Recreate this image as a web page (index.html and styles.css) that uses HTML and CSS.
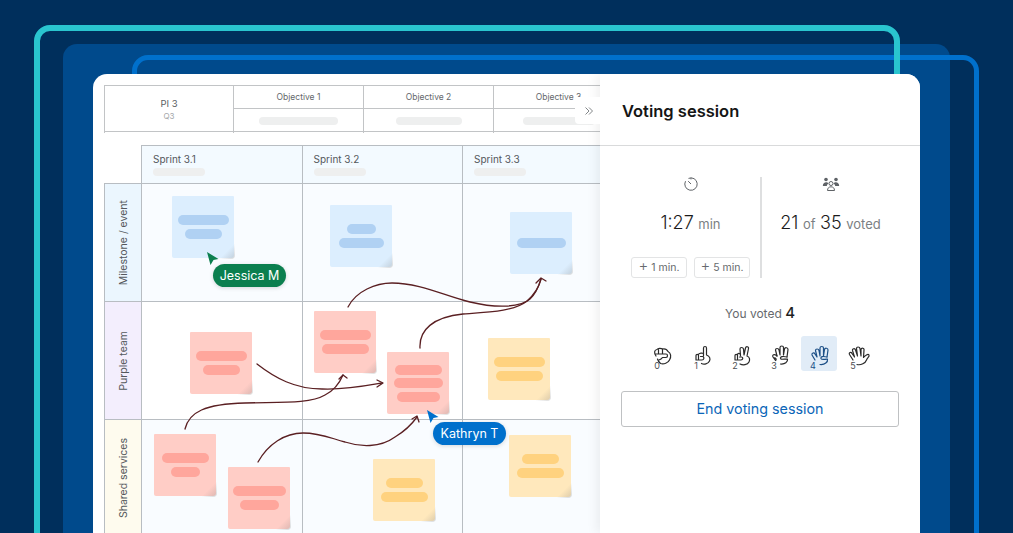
FILE: index.html
```html
<!DOCTYPE html>
<html lang="en">
<head>
    <meta charset="UTF-8">
    <meta name="viewport" content="width=device-width, initial-scale=1.0">
    <title>Voting session</title>
    <link rel="stylesheet" href="styles.css">
</head>
<body>
    <div class="backdrop backdrop-fill"></div>
    <div class="backdrop backdrop-blue"></div>
    <div class="backdrop backdrop-teal"></div>

    <div class="card">
        <section class="board">
            <div class="pi-table">
                <div class="pi-name">
                    <strong>PI 3</strong>
                    <span>Q3</span>
                </div>
                <div class="pi-objective">Objective 1</div>
                <div class="pi-objective">Objective 2</div>
                <div class="pi-objective">Objective 3</div>
                <div class="pi-slot"><i class="skeleton skeleton-a"></i></div>
                <div class="pi-slot"><i class="skeleton skeleton-b"></i></div>
                <div class="pi-slot"><i class="skeleton skeleton-c"></i></div>
            </div>

            <div class="plan">
                <div class="plan-corner"></div>
                <div class="sprint">Sprint 3.1<i class="skeleton"></i></div>
                <div class="sprint">Sprint 3.2<i class="skeleton"></i></div>
                <div class="sprint">Sprint 3.3<i class="skeleton"></i></div>

                <div class="team team-blue"><span>Milestone / event</span></div>
                <div class="cell tinted"></div>
                <div class="cell tinted"></div>
                <div class="cell tinted"></div>

                <div class="team team-purple"><span>Purple team</span></div>
                <div class="cell"></div>
                <div class="cell"></div>
                <div class="cell"></div>

                <div class="team team-yellow"><span>Shared services</span></div>
                <div class="cell tinted"></div>
                <div class="cell tinted"></div>
                <div class="cell tinted"></div>
            </div>

            <!-- sticky notes sit on the plan like pins on a map -->
            <div class="note blue note-1"><i class="w51"></i><i class="w37"></i></div>
            <div class="note blue note-2"><i class="w29"></i><i class="w45"></i></div>
            <div class="note blue note-3"><i class="w49"></i></div>
            <div class="note red note-4"><i class="w51"></i><i class="w37"></i></div>
            <div class="note red note-5"><i class="w51"></i><i class="w47"></i></div>
            <div class="note red note-6"><i class="w47"></i><i class="w49"></i><i class="w43"></i></div>
            <div class="note yellow note-7"><i class="w51"></i><i class="w47"></i></div>
            <div class="note red note-8"><i class="w47"></i><i class="w29"></i></div>
            <div class="note red note-9"><i class="w53"></i><i class="w39"></i></div>
            <div class="note yellow note-10"><i class="w37"></i><i class="w47"></i></div>
            <div class="note yellow note-11"><i class="w37"></i><i class="w47"></i></div>

            <svg class="links" viewBox="93 74 507 459" fill="none">
                <path d="M348 307C356 291 376 283 392 283C420 283 445 296 470 302C495 308 520 308 530 299C537 293 539 285 541 279"/>
                <path d="M420 348C419 330 433 317 463 314C490 312 515 311 527 301C535 294 539 287 541 279"/>
                <path d="M536 283L541 278L546 281"/>
                <path d="M257 364C275 378 295 389 322 389C345 390 365 386 382 383"/>
                <path d="M377 380L383 383L377 387"/>
                <path d="M185 429C189 412 205 404 245 403C280 402 310 404 325 395C335 390 340 382 343 375"/>
                <path d="M339 379L343 375L347 378"/>
                <path d="M258 462C268 444 285 433 303 433C320 433 330 438 345 442C360 447 380 448 395 437C405 431 412 424 417 417"/>
                <path d="M412 419L417 416L419 422"/>
            </svg>

            <div class="cursor cursor-green">
                <svg width="12" height="13" viewBox="0 0 12 13"><path d="M0 0L11.500 7L6.500 8L3.500 13Z"/></svg>
                <span class="cursor-tag">Jessica M</span>
            </div>
            <div class="cursor cursor-blue">
                <svg width="12" height="13" viewBox="0 0 12 13"><path d="M0 0L11.500 7L6.500 8L3.500 13Z"/></svg>
                <span class="cursor-tag">Kathryn T</span>
            </div>
        </section>

        <aside class="panel">
            <button class="collapse" type="button" aria-label="Collapse">
                <svg width="10" height="10" viewBox="0 0 10 10" fill="none"><path d="M1.500 1.500L5 5L1.500 8.500M5 1.500L8.500 5L5 8.500"/></svg>
            </button>

            <header class="panel-header">
                <h2>Voting session</h2>
            </header>

            <div class="stats">
                <div class="stat">
                    <svg class="stat-icon" width="16" height="16" viewBox="0 0 16 16" fill="none">
                        <path d="M5.500 2.400A6.200 6.200 0 1 1 2.500 5.200"/>
                        <path d="M8 1.800V3.400M5.200 5.200L8 8"/>
                    </svg>
                    <p class="stat-value">1:27 <small>min</small></p>
                    <div class="stat-actions">
                        <button type="button"><b>+</b> 1 min.</button>
                        <button type="button"><b>+</b> 5 min.</button>
                    </div>
                </div>
                <div class="stat">
                    <svg class="stat-icon" width="18" height="16" viewBox="0 0 18 16">
                        <circle cx="4" cy="3.500" r="1.800" class="solid"/>
                        <circle cx="14" cy="3.500" r="1.800" class="solid"/>
                        <path d="M0.800 10C0.800 7.500 2.500 6.300 4 6.300C5 6.300 6 6.800 6.500 7.600C5.500 8.200 5 9 4.800 10Z" class="solid"/>
                        <path d="M17.200 10C17.200 7.500 15.500 6.300 14 6.300C13 6.300 12 6.800 11.500 7.600C12.500 8.200 13 9 13.200 10Z" class="solid"/>
                        <circle cx="9" cy="7.500" r="2" class="line"/>
                        <path d="M5.500 14.500C5.500 12 7 10.800 9 10.800C11 10.800 12.500 12 12.500 14.500Z" class="line"/>
                    </svg>
                    <p class="stat-value">21 <small>of</small> 35 <small>voted</small></p>
                </div>
            </div>

            <p class="your-vote">You voted <strong>4</strong></p>

            <div class="hands">
                <button class="hand" type="button">
                    <svg width="28" height="30" viewBox="0 0 28 30" fill="none">
                        <path d="M7 15C5 12 5 9 8 8.500C9 7 12 7 13.500 8C16 7.500 18 8.500 19 10.500C22 12 22.500 16 20.500 19C19 22 15 23.500 11.500 22.500C10 21 9 20 8.500 18"/>
                        <path d="M9.500 8.500V13M13.500 8V13M6.500 13H17C19 13 19 16.500 17 16.500H13.500C12.500 18 11.500 18.500 10 19"/>
                        <text x="8" y="28">0</text>
                    </svg>
                </button>
                <button class="hand" type="button">
                    <svg width="28" height="30" viewBox="0 0 28 30" fill="none">
                        <path d="M15.500 15V7C15.500 5 18.500 5 18.500 7V14C22 15 22.500 18 21.500 20C20 23 16 24 13.500 22.500"/>
                        <path d="M8 19V14.500C8 13 10.500 13 10.500 14.500M10.500 18V13.500C10.500 12 15.500 11.500 15.500 13M8 19H14C16 19 16.500 16.500 15 15.500H12.500"/>
                        <text x="8" y="28">1</text>
                    </svg>
                </button>
                <button class="hand" type="button">
                    <svg width="28" height="30" viewBox="0 0 28 30" fill="none">
                        <path d="M13.500 15L13 8C13 6 16 6 16.500 8L17 14L18.500 7C19 5 22 5.500 21.500 7.500L20 15C23 16 23 19 22 21C20.500 24 16 24.500 13 23"/>
                        <path d="M8 19V14.500C8 13 10.500 13 10.500 14.500M10.500 18V13.500C10.500 12 13 12 13.500 13.500M8 19H14C16 19 16.500 16.500 14.500 16H12.500"/>
                        <text x="8" y="28">2</text>
                    </svg>
                </button>
                <button class="hand" type="button">
                    <svg width="28" height="30" viewBox="0 0 28 30" fill="none">
                        <path d="M11 15L9.500 9C9.500 7 12.500 7 13 9L14 14V6.500C14 4.500 17.500 4.500 17.500 6.500V14L18.500 8C19 6 22 6.500 22 8.500L21 16"/>
                        <path d="M11 15C8 12.500 6 14 7 16L9.500 19.500C11 18.500 9.500 16.500 8 17"/>
                        <path d="M21 16C17 15 14 15.500 14.500 17.500C15 19 18 18 21.500 18C22 21 19 23.500 14.500 23"/>
                        <text x="8" y="28">3</text>
                    </svg>
                </button>
                <button class="hand is-picked" type="button">
                    <svg width="28" height="30" viewBox="0 0 28 30" fill="none">
                        <path d="M10 19L7 14C6.500 12 9 11 10 13L12 16L10.500 9.500C10.500 7.500 13.500 7.500 14 9.500L15 15V7C15 5 18.500 5 18.500 7V15L19.500 8.500C20 6.500 23 7 23 9L22 16"/>
                        <path d="M22 16C18 15 15.500 15.500 16 17.500C16.500 19 19 18.500 22.500 18C23 21 20 24 15 23.500"/>
                        <text x="8" y="28">4</text>
                    </svg>
                </button>
                <button class="hand" type="button">
                    <svg width="28" height="30" viewBox="0 0 28 30" fill="none">
                        <path d="M9 19L5.500 13.500C4.500 11.500 7 10.500 8 12.500L10.500 16L8.500 9.500C8 7.500 11 7 11.500 9L13.500 15L12.500 7.500C12.500 5.500 15.500 5.500 16 7.500L17 15L17 8.500C17.500 6.500 20.500 7 20 9L19.500 16.500C21 14.500 24 12.500 25 14C26 15.500 23 17 22.500 19C21.500 22 17 24.500 13 23.500"/>
                        <text x="9" y="28">5</text>
                    </svg>
                </button>
            </div>

            <button class="end-session" type="button">End voting session</button>
        </aside>
    </div>
</body>
</html>
```

FILE: styles.css
```css
/* Reset and Base Styles */
* {
    margin: 0;
    padding: 0;
    box-sizing: border-box;
}

body {
    font-family: Inter, "Liberation Sans", sans-serif;
    background: #002F5C;
    height: 100vh;
    overflow: hidden;
    color: #1B1B1B;
    padding: 74px 0 0 93px;
}

button {
    font-family: inherit;
    cursor: pointer;
}

/* Backdrop frames behind the card */
.backdrop {
    position: absolute;
    height: 700px;
}

.backdrop-fill {
    left: 63px;
    top: 44px;
    width: 887px;
    background: #004A8C;
    border-radius: 14px;
}

.backdrop-blue {
    left: 132px;
    top: 55px;
    width: 847px;
    border: 5px solid #0070CC;
    border-radius: 16px;
}

.backdrop-teal {
    left: 34px;
    top: 25px;
    width: 866px;
    border: 6px solid #2AC5CF;
    border-radius: 16px;
}

/* Card */
.card {
    position: relative;
    display: flex;
    width: 827px;
    height: 459px;
    background: #fff;
    border-radius: 14px 14px 0 0;
    overflow: hidden;
}

/* Board */
.board {
    position: relative;
    width: 507px;
    flex-shrink: 0;
    padding: 11px 0 0 11px;
    overflow: hidden;
}

.pi-table {
    display: grid;
    grid-template-columns: 129px repeat(3, 130px);
    grid-template-rows: 23px 24px;
    width: 519px;
    height: 47px;
    border-top: 1px solid #C2C4C6;
    border-bottom: 1px solid #C2C4C6;
    margin-bottom: 13px;
}

.pi-name {
    grid-row: 1 / 3;
    display: flex;
    flex-direction: column;
    align-items: center;
    justify-content: center;
    gap: 2px;
    border-left: 1px solid #C2C4C6;
    font-size: 9.500px;
    color: #5A5E62;
}

.pi-name strong {
    font-weight: 400;
}

.pi-name span {
    font-size: 8px;
    color: #A4A7AA;
}

.pi-objective {
    display: flex;
    align-items: center;
    justify-content: center;
    border-left: 1px solid #C2C4C6;
    border-bottom: 1px solid #C2C4C6;
    font-size: 8.500px;
    color: #63676B;
}

.pi-slot {
    display: flex;
    align-items: center;
    justify-content: center;
    border-left: 1px solid #C2C4C6;
}

.skeleton {
    display: block;
    height: 8px;
    border-radius: 4px;
    background: #EEEFEF;
}

.skeleton-a {
    width: 79px;
}

.skeleton-b {
    width: 66px;
}

.skeleton-c {
    width: 72px;
}

/* Plan grid */
.plan {
    display: grid;
    grid-template-columns: 37px repeat(3, 160.500px);
    grid-template-rows: 38px repeat(3, 118px);
    width: 560px;
}

.sprint {
    padding: 7px 0 0 11px;
    background: #F3FAFF;
    border-top: 1px solid #B8BDC2;
    border-left: 1px solid #B8BDC2;
    font-size: 10px;
    line-height: 12px;
    color: #54585C;
}

.sprint .skeleton {
    width: 52px;
    margin-top: 3px;
}

.team {
    display: flex;
    align-items: center;
    justify-content: center;
    border-top: 1px solid #B8BDC2;
    border-left: 1px solid #B8BDC2;
    font-size: 10.500px;
    color: #54585C;
}

.team span {
    writing-mode: vertical-rl;
    transform: rotate(180deg);
    white-space: nowrap;
}

.team-blue {
    background: #EBF6FE;
}

.team-purple {
    background: #F3EEFD;
}

.team-yellow {
    background: #FEFBEE;
}

.cell {
    border-top: 1px solid #B8BDC2;
    border-left: 1px solid #B8BDC2;
}

.tinted {
    background: #F9FCFF;
}

/* Sticky notes */
.note {
    position: absolute;
    display: flex;
    flex-direction: column;
    align-items: center;
    justify-content: center;
    gap: 3.500px;
    width: 62px;
    height: 62px;
    border-radius: 1px 1px 3px 2px;
}

.note::after {
    content: "";
    position: absolute;
    right: -1px;
    bottom: -1px;
    width: 20px;
    height: 20px;
    border-bottom-right-radius: 4px;
    background: linear-gradient(135deg, rgba(120,120,120,0) 60%, rgba(120,120,120,0.28) 100%);
}

.note i {
    display: block;
    height: 10px;
    border-radius: 5px;
}

.blue {
    background: #DCEEFE;
}

.blue i {
    background: #B0D1F3;
}

.red {
    background: #FFCDC6;
}

.red i {
    background: #FFA69C;
}

.yellow {
    background: #FFE8BC;
}

.yellow i {
    background: #FFD27F;
}

.w29 { width: 29px; }
.w37 { width: 37px; }
.w39 { width: 39px; }
.w43 { width: 43px; }
.w45 { width: 45px; }
.w47 { width: 47px; }
.w49 { width: 49px; }
.w51 { width: 51px; }
.w53 { width: 53px; }

.note-1 { left: 79px; top: 122px; }
.note-2 { left: 237px; top: 131px; }
.note-3 { left: 417px; top: 138px; }
.note-4 { left: 97px; top: 258px; }
.note-5 { left: 221px; top: 237px; }
.note-6 { left: 294px; top: 278px; }
.note-7 { left: 395px; top: 264px; }
.note-8 { left: 61px; top: 360px; }
.note-9 { left: 135px; top: 393px; }
.note-10 { left: 280px; top: 385px; }
.note-11 { left: 416px; top: 361px; }

/* Arrows between notes */
.links {
    position: absolute;
    left: 0;
    top: 0;
    width: 507px;
    height: 459px;
}

.links path {
    stroke: #5A1F22;
    stroke-width: 1.300px;
    stroke-linecap: round;
    stroke-linejoin: round;
}

/* Live cursors */
.cursor {
    position: absolute;
    display: flex;
    flex-direction: column;
    align-items: flex-start;
}

.cursor svg {
    display: block;
    overflow: visible;
}

.cursor-tag {
    width: 73px;
    height: 23px;
    margin-left: 6px;
    margin-top: -1px;
    border-radius: 12px;
    font-size: 12.500px;
    line-height: 23px;
    text-align: center;
    color: #fff;
    white-space: nowrap;
    box-shadow: 0 1px 4px rgba(0,0,0,0.15);
}

.cursor-green {
    left: 114px;
    top: 178px;
}

.cursor-green path {
    fill: #0B7F4F;
}

.cursor-green .cursor-tag {
    background: #0B7F4F;
}

.cursor-blue {
    left: 334px;
    top: 336px;
}

.cursor-blue path {
    fill: #0070CC;
}

.cursor-blue .cursor-tag {
    background: #0070CC;
}

/* Voting panel */
.panel {
    position: relative;
    width: 320px;
    flex-shrink: 0;
    background: #fff;
    box-shadow: -4px 0 10px rgba(0,0,0,0.06);
}

.collapse {
    position: absolute;
    left: -25px;
    top: 23px;
    display: flex;
    align-items: center;
    justify-content: center;
    width: 25px;
    height: 27px;
    padding-left: 2px;
    border: none;
    border-radius: 4px 0 0 4px;
    background: #fff;
}

.collapse path {
    stroke: #74787C;
    stroke-width: 0.900px;
}

.panel-header {
    display: flex;
    align-items: center;
    height: 72px;
    padding: 2px 0 0 22px;
    border-bottom: 1px solid #D9DADB;
}

.panel-header h2 {
    font-size: 16.500px;
    font-weight: 600;
    color: #151515;
}

.stats {
    display: grid;
    grid-template-columns: 139px 139px;
    margin: 31px 0 0 21px;
    height: 100px;
}

.stat {
    display: flex;
    flex-direction: column;
    align-items: center;
}

.stat + .stat {
    border-left: 2px solid #DEDFE0;
}

.stat-icon {
    display: block;
    height: 16px;
    margin-top: -1px;
}

.stat-icon path,
.stat-icon circle {
    stroke: #5F6367;
    stroke-width: 1;
}

.stat-icon .solid {
    fill: #5F6367;
    stroke: none;
}

.stat-icon .line {
    fill: none;
}

.stat-value {
    margin-top: 19px;
    font-size: 18px;
    font-weight: 300;
    line-height: 24px;
    word-spacing: -0.500px;
    color: #1B1B1B;
}

.stat-value small {
    font-size: 13px;
    font-weight: 400;
    color: #7B7F83;
}

.stat-actions {
    display: flex;
    gap: 7px;
    margin-top: 21px;
}

.stat-actions button {
    width: 56px;
    height: 21px;
    border: 1px solid #E3E4E5;
    border-radius: 3px;
    background: #fff;
    font-size: 10.500px;
    color: #666A6E;
}

.stat-actions b {
    font-size: 15px;
    font-weight: 300;
    line-height: 10px;
}

.your-vote {
    margin-top: 26px;
    text-align: center;
    font-size: 12px;
    line-height: 20px;
    color: #66696D;
}

.your-vote strong {
    font-size: 15px;
    font-weight: 500;
    color: #1F1F1F;
}

.hands {
    display: flex;
    justify-content: center;
    gap: 3px;
    margin-top: 12px;
}

.hand {
    width: 36px;
    height: 35px;
    padding-top: 4px;
    border: none;
    border-radius: 3px;
    background: none;
}

.hand svg {
    display: block;
    margin: 0 auto;
}

.hand path {
    stroke: #2A2A2A;
    stroke-width: 1.200px;
    stroke-linecap: round;
    stroke-linejoin: round;
}

.hand text {
    font-size: 9px;
    text-anchor: middle;
    fill: #4B4E52;
}

.is-picked {
    background: #E1ECF7;
}

.is-picked path {
    stroke: #1C4F86;
}

.is-picked text {
    fill: #1C4F86;
}

.end-session {
    display: block;
    width: 278px;
    height: 36px;
    margin: 20px 0 0 21px;
    padding-bottom: 1px;
    border: 1px solid #BFC1C3;
    border-radius: 3px;
    background: #fff;
    font-size: 14.300px;
    color: #0B66B8;
}
```
